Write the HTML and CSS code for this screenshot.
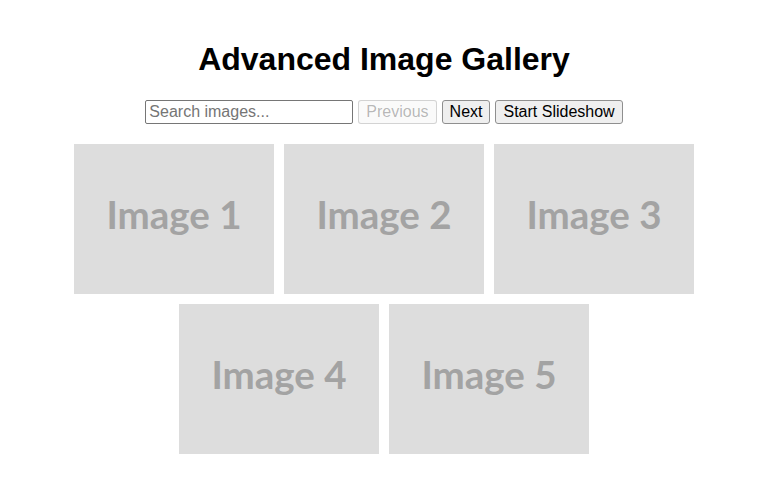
FILE: index.html
```html
<!DOCTYPE html>
<html>
<head>
<meta charset="utf-8">
<title>Advanced Image Gallery</title>
<link rel="stylesheet" href="styles.css">
</head>
<body>
<h1 class="title">Advanced Image Gallery</h1>
<div class="controls">
  <input class="search" type="text" placeholder="Search images...">
  <button class="btn" disabled>Previous</button>
  <button class="btn">Next</button>
  <button class="btn">Start Slideshow</button>
</div>
<div class="gallery">
  <div class="tile"><span>Image 1</span></div>
  <div class="tile"><span>Image 2</span></div>
  <div class="tile"><span>Image 3</span></div>
  <div class="tile"><span>Image 4</span></div>
  <div class="tile"><span>Image 5</span></div>
</div>
</body>
</html>
```
FILE: styles.css
```css
html, body {
  margin: 0;
  background: #fff;
}
body {
  padding: 20px;
  font-family: "Liberation Sans", Arial, sans-serif;
  text-align: center;
}
.title {
  font-size: 32px;
  font-weight: bold;
  margin: 21.44px 0;
  line-height: 37px;
}
.controls {
  display: flex;
  justify-content: center;
  align-items: center;
  gap: 5px;
  margin-bottom: 20px;
}
.search {
  width: 200px;
  height: 20px;
  padding: 1px 3px;
  font-family: "Liberation Sans", Arial, sans-serif;
  font-size: 16px;
  border: 1px solid #767676;
  border-radius: 2px;
  box-sizing: content-box;
}
.search::placeholder {
  color: #757575;
}
.btn {
  font-family: "Liberation Sans", Arial, sans-serif;
  font-size: 16px;
  padding: 1px 7px;
  height: 24px;
  border: 1px solid #8f8f8f;
  border-radius: 3px;
  background: #efefef;
  color: #000;
}
.btn:disabled {
  border-color: rgba(118,118,118,0.3);
  background: rgba(239,239,239,0.3);
  color: rgba(16,16,16,0.3);
}
.gallery {
  display: flex;
  flex-wrap: wrap;
  justify-content: center;
  gap: 10px;
  width: 640px;
  margin: 0 auto;
}
.tile {
  width: 200px;
  height: 150px;
  background: #dddddd;
  display: flex;
  align-items: center;
  justify-content: center;
}
.tile span {
  font-family: Lato, "Open Sans", sans-serif;
  font-weight: bold;
  font-size: 38.5px;
  line-height: 1;
  color: #a3a3a3;
  margin-bottom: 9px;
}
```
